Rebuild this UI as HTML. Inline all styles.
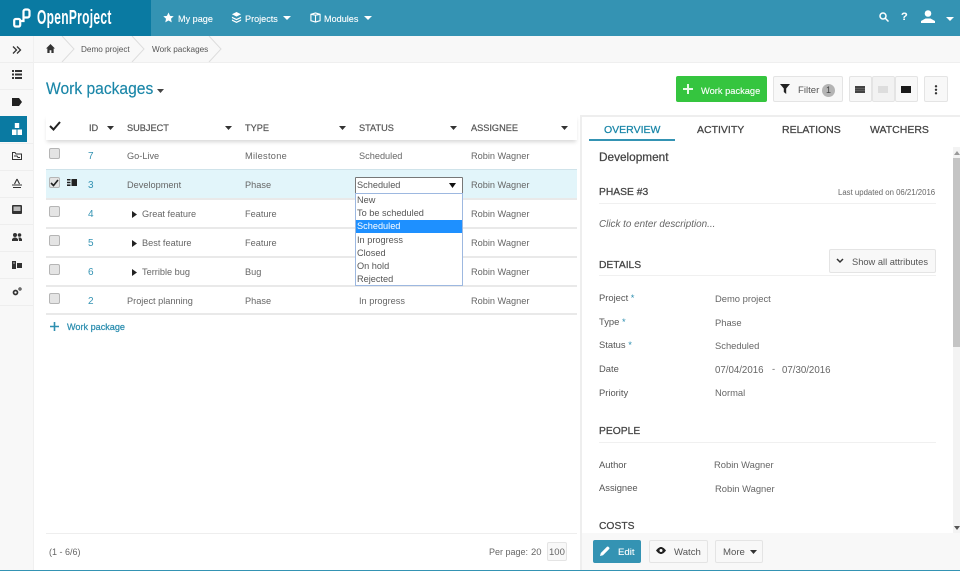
<!DOCTYPE html>
<html><head><meta charset="utf-8"><style>
html,body{margin:0;padding:0;width:960px;height:571px;overflow:hidden;background:#fff}
#p{position:relative;width:960px;height:571px;overflow:hidden;font-family:"Liberation Sans",sans-serif;font-size:9.2px;color:#666;filter:blur(.35px)}
#p div,#p span,#p svg{position:absolute}
.t{white-space:nowrap;line-height:12px}
.m{margin-top:1px}
.h{color:#555;font-size:9.2px;-webkit-text-stroke:.2px #555}
.l{color:#3493b3;font-size:10px;margin-top:1px}
.w{color:#fff;-webkit-text-stroke:.1px #fff;margin-top:1px}
.sep{height:1px;background:#f0f0f0}
.rl{position:absolute;left:46px;width:531px;height:2px;background:#e9e9e9}
.cb{width:9px;height:9px;left:49px;background:#e4e4e4;border:1px solid #b5b5b5;border-radius:2px}
.btn{background:#f8f8f8;border:1px solid #e4e4e4;border-radius:2px;box-sizing:border-box}
.opt{left:357px;color:#555;font-size:9.2px}
.lab{left:599px;color:#555;font-size:9.4px}
.val{left:715px;color:#666;font-size:9.4px}
.sec{left:599px;font-size:10.300px;color:#444;-webkit-text-stroke:.25px #444;margin-top:1px}
.tab{top:123px;font-size:10.500px;color:#444;-webkit-text-stroke:.25px #444;margin-top:1px}
</style></head><body><div id="p">
<div style="left:0;top:0;width:960px;height:36px;background:#3493b3"></div>
<div style="left:0;top:0;width:151px;height:36px;background:#0a7aa2"></div>
<svg style="left:13px;top:8px" width="18" height="20" viewBox="0 0 18 20" fill="none" stroke="#fff" stroke-width="2.200"><rect x="1.200" y="11" width="6" height="7.500" rx="1.500"/><path d="M7 13h3.500V3.500a2 2 0 0 1 2-2h2a2 2 0 0 1 2 2v4a2 2 0 0 1-2 2h-4"/></svg>
<div class="t w" style="left:37px;top:6px;font-size:20px;line-height:22px;transform:scaleX(.6);transform-origin:0 0;letter-spacing:.5px;font-weight:bold;-webkit-text-stroke:0">OpenProject</div>

<svg style="left:163px;top:12px" width="11" height="11" viewBox="0 0 24 24" fill="#fff"><path d="M12 1l3.400 7.400 8 .9-6 5.400 1.700 8L12 18.600 4.900 22.700l1.700-8-6-5.400 8-.9z"/></svg>
<div class="t w" style="left:178px;top:12px;font-size:9.100px">My page</div>
<svg style="left:231px;top:12px" width="11" height="11" viewBox="0 0 12 12" fill="#fff"><path d="M6 0l5 2.500L6 5 1 2.500zM1 5l5 2.500L11 5v1.500L6 9 1 6.500zM1 8l5 2.500L11 8v1.500L6 12 1 9.500z"/></svg>
<div class="t w" style="left:245px;top:12px;font-size:9.100px">Projects</div>
<svg style="left:283px;top:16px" width="8" height="4"><path d="M0 0h8L4 4z" fill="#fff"/></svg>
<svg style="left:310px;top:12px" width="11" height="11" viewBox="0 0 12 12" fill="none" stroke="#fff" stroke-width="1.200"><path d="M1 2.500L6 1l5 1.500v7L6 11 1 9.500zM6 3.500V11M1 2.500l5 1 5-1"/></svg>
<div class="t w" style="left:324px;top:12px;font-size:9.100px">Modules</div>
<svg style="left:364px;top:16px" width="8" height="4"><path d="M0 0h8L4 4z" fill="#fff"/></svg>
<svg style="left:879px;top:12px" width="10" height="10" viewBox="0 0 10 10" fill="none" stroke="#fff" stroke-width="1.500"><circle cx="4" cy="4" r="3"/><path d="M6 6l3.500 3.500"/></svg>
<div class="t w" style="left:901px;top:10px;font-size:11px;font-weight:bold">?</div>
<svg style="left:921px;top:10px" width="14" height="13" viewBox="0 0 14 13" fill="#fff"><circle cx="7" cy="3.500" r="3.300"/><path d="M0 13v-2l4.500-2.500h5L14 11v2z"/></svg>
<svg style="left:946px;top:17px" width="8" height="4"><path d="M0 0h8L4 4z" fill="#fff"/></svg>

<div style="left:0;top:36px;width:960px;height:26px;background:#f8f8f8"></div>
<div style="left:0;top:62px;width:960px;height:1px;background:#efefef"></div>
<div style="left:0;top:36px;width:33px;height:535px;background:#f8f8f8;border-right:1px solid #f0f0f0"></div>
<svg style="left:46px;top:44px" width="9" height="9" viewBox="0 0 10 10" fill="#333"><path d="M5 0l5 5H8.500v5H6V7H4v3H1.500V5H0z"/></svg>
<svg style="left:60px;top:36px" width="170" height="26" fill="none" stroke="#ddd"><path d="M2 0l12 13L2 26M72 0l12 13L72 26M149 0l12 13L149 26"/></svg>
<div class="t m" style="left:81px;top:43px;font-size:8.200px;color:#555">Demo project</div>
<div class="t m" style="left:152px;top:43px;font-size:8.200px;color:#555">Work packages</div>

<div style="left:0;top:62px;width:33px;height:1px;background:#eee"></div>
<div style="left:0;top:89px;width:33px;height:1px;background:#eee"></div>
<div style="left:0;top:116px;width:27px;height:26px;background:#0a7aa2"></div>
<div style="left:0;top:143px;width:33px;height:1px;background:#eee"></div>
<div style="left:0;top:170px;width:33px;height:1px;background:#eee"></div>
<div style="left:0;top:197px;width:33px;height:1px;background:#eee"></div>
<div style="left:0;top:224px;width:33px;height:1px;background:#eee"></div>
<div style="left:0;top:251px;width:33px;height:1px;background:#eee"></div>
<div style="left:0;top:278px;width:33px;height:1px;background:#eee"></div>
<div style="left:0;top:305px;width:33px;height:1px;background:#eee"></div>
<svg style="left:12px;top:46px" width="10" height="8" fill="none" stroke="#333" stroke-width="1.300"><path d="M1 .5L4.500 4 1 7.500M5 .5L8.500 4 5 7.500"/></svg>
<svg style="left:12px;top:70px" width="10" height="9" fill="#333"><path d="M0 0h2v2H0zM3 0h7v2H3zM0 3.500h2v2H0zM3 3.500h7v2H3zM0 7h2v2H0zM3 7h7v2H3z"/></svg>
<svg style="left:12px;top:98px" width="10" height="8" fill="#222"><path d="M0 0h7l3 4-3 4H0z"/></svg>
<svg style="left:12px;top:123px" width="10" height="12" fill="#fff"><path d="M2.800 0h4.400v5H2.800zM0 6.500h4.500V12H0zM5.500 6.500H10V12H5.500z"/></svg>
<svg style="left:12px;top:152px" width="10" height="8" fill="none" stroke="#333"><path d="M.5 1v6.500h9V2H4L3 .5H.5zM2 4h3l1 1.500h2"/></svg>
<svg style="left:12px;top:178px" width="10" height="10" fill="none" stroke="#333" stroke-width="1.100"><path d="M5 1L2.500 6M5 1l2.500 5M0 7h10M1 9.500h8"/></svg>
<svg style="left:12px;top:205px" width="10" height="9"><rect width="10" height="9" rx="1" fill="#333"/><rect x="1.500" y="1.500" width="7" height="4.500" fill="#bbb"/></svg>
<svg style="left:12px;top:233px" width="10" height="8" fill="#333"><circle cx="3" cy="2" r="2"/><circle cx="7.500" cy="2" r="1.800"/><path d="M0 8V6l2-1.500h2L6 6v2zM6.500 4.500h2L10 6v2H7z"/></svg>
<svg style="left:12px;top:260px" width="10" height="9" fill="#333"><path d="M0 1h4v8H0zM5 3h5v5H5z"/><path d="M1 2.500h2v1H1z" fill="#bbb"/></svg>
<svg style="left:12px;top:287px" width="10" height="9" fill="none" stroke="#333"><circle cx="3.500" cy="5.500" r="2" stroke-width="1.700"/><circle cx="8" cy="2" r="1.100"/></svg>

<div class="t" style="left:46px;top:78px;font-size:16.800px;line-height:21px;color:#1a86a8;-webkit-text-stroke:.15px #1a86a8;transform:scaleX(.93);transform-origin:0 0">Work packages</div>
<svg style="left:157px;top:89px" width="7" height="4"><path d="M0 0h7L3.500 4z" fill="#444"/></svg>

<div style="left:676px;top:76px;width:91px;height:26px;background:#35c53f;border-radius:2px"></div>
<svg style="left:683px;top:84px" width="10" height="10" fill="#e8fbe8"><path d="M4 0h2v4h4v2H6v4H4V6H0V4h4z"/></svg>
<div class="t w" style="left:701px;top:84px;font-size:9.300px">Work package</div>
<div class="btn" style="left:773px;top:76px;width:70px;height:26px"></div>
<svg style="left:780px;top:84px" width="10" height="10" fill="#222"><path d="M0 0h10L6.200 4.500V10L3.800 8V4.500z"/></svg>
<div class="t m" style="left:798px;top:84px;color:#555;font-size:9.600px">Filter</div>
<div class="t" style="left:822px;top:84px;width:13px;height:13px;background:#b4b4b4;border-radius:7px;text-align:center;line-height:13px;color:#444;font-size:9px">1</div>
<div class="btn" style="left:849px;top:76px;width:23px;height:26px"></div>
<div class="btn" style="left:872px;top:76px;width:23px;height:26px;background:#f2f2f2"></div>
<div class="btn" style="left:895px;top:76px;width:23px;height:26px"></div>
<div class="btn" style="left:924px;top:76px;width:24px;height:26px"></div>
<div style="left:855px;top:86px;width:10px;height:7px;background:repeating-linear-gradient(#444 0 2px,#777 2px 2.500px)"></div>
<div style="left:878px;top:86px;width:10px;height:7px;background:#ddd"></div>
<div style="left:901px;top:86px;width:10px;height:7px;background:#1a1a1a"></div>
<svg style="left:934px;top:85px" width="4" height="10" fill="#333"><circle cx="2" cy="1.300" r="1.200"/><circle cx="2" cy="4.800" r="1.200"/><circle cx="2" cy="8.300" r="1.200"/></svg>

<div style="left:46px;top:115px;width:531px;height:25px;background:#fff;box-shadow:0 3px 4px -1px rgba(0,0,0,.16)"></div>
<svg style="left:49px;top:121px" width="12" height="10"><path d="M1 5l3.500 3.500L11 1" fill="none" stroke="#222" stroke-width="2"/></svg>
<div class="t h" style="left:89px;top:122px">ID</div>
<div class="t h" style="left:127px;top:122px">SUBJECT</div>
<div class="t h" style="left:245px;top:122px">TYPE</div>
<div class="t h" style="left:359px;top:122px">STATUS</div>
<div class="t h" style="left:471px;top:122px">ASSIGNEE</div>
<svg style="left:107px;top:126px" width="7" height="4"><path d="M0 0h7L3.500 4z" fill="#333"/></svg>
<svg style="left:225px;top:126px" width="7" height="4"><path d="M0 0h7L3.500 4z" fill="#333"/></svg>
<svg style="left:339px;top:126px" width="7" height="4"><path d="M0 0h7L3.500 4z" fill="#333"/></svg>
<svg style="left:450px;top:126px" width="7" height="4"><path d="M0 0h7L3.500 4z" fill="#333"/></svg>
<svg style="left:561px;top:126px" width="7" height="4"><path d="M0 0h7L3.500 4z" fill="#333"/></svg>

<div style="left:46px;top:169px;width:531px;height:30px;background:#e2f5fa"></div>
<div class="rl" style="top:169px;background:#cfe3ea;height:1px"></div>
<div class="rl" style="top:198px"></div><div class="rl" style="top:227px"></div><div class="rl" style="top:256px"></div><div class="rl" style="top:285px"></div><div class="rl" style="top:313px"></div>

<div class="cb" style="top:148px"></div><div class="cb" style="top:177px"></div><div class="cb" style="top:206px"></div><div class="cb" style="top:235px"></div><div class="cb" style="top:264px"></div><div class="cb" style="top:293px"></div>
<svg style="left:50px;top:179px" width="9" height="8"><path d="M1 4l2.500 2.500L8 1" fill="none" stroke="#222" stroke-width="1.600"/></svg>
<svg style="left:67px;top:179px" width="10" height="7" fill="#222"><path d="M0 0h3.500v1.500H0zM0 2.700h3.500v1.500H0zM0 5.400h3.500V7H0zM4.500 0H10v7H4.500z"/></svg>

<div class="t l" style="left:88px;top:150px">7</div><div class="t" style="left:127px;top:150px">Go-Live</div><div class="t" style="left:245px;top:150px;letter-spacing:.3px">Milestone</div><div class="t" style="left:359px;top:150px">Scheduled</div><div class="t" style="left:471px;top:150px">Robin Wagner</div>
<div class="t l" style="left:88px;top:179px">3</div><div class="t" style="left:127px;top:179px">Development</div><div class="t" style="left:245px;top:179px">Phase</div><div class="t" style="left:471px;top:179px">Robin Wagner</div>
<div class="t l" style="left:88px;top:208px">4</div><div class="t" style="left:142px;top:208px">Great feature</div><div class="t" style="left:245px;top:208px">Feature</div><div class="t" style="left:471px;top:208px">Robin Wagner</div>
<div class="t l" style="left:88px;top:237px">5</div><div class="t" style="left:142px;top:237px">Best feature</div><div class="t" style="left:245px;top:237px">Feature</div><div class="t" style="left:471px;top:237px">Robin Wagner</div>
<div class="t l" style="left:88px;top:266px">6</div><div class="t" style="left:142px;top:266px">Terrible bug</div><div class="t" style="left:245px;top:266px">Bug</div><div class="t" style="left:471px;top:266px">Robin Wagner</div>
<div class="t l" style="left:88px;top:295px">2</div><div class="t" style="left:127px;top:295px">Project planning</div><div class="t" style="left:245px;top:295px">Phase</div><div class="t" style="left:359px;top:295px">In progress</div><div class="t" style="left:471px;top:295px">Robin Wagner</div>
<svg style="left:132px;top:211px" width="5" height="7"><path d="M0 0l5 3.500L0 7z" fill="#222"/></svg>
<svg style="left:132px;top:240px" width="5" height="7"><path d="M0 0l5 3.500L0 7z" fill="#222"/></svg>
<svg style="left:132px;top:269px" width="5" height="7"><path d="M0 0l5 3.500L0 7z" fill="#222"/></svg>

<div style="left:355px;top:177px;width:106px;height:15px;background:#fff;border:1px solid #777;border-radius:1px"></div>
<div class="t opt" style="top:179px">Scheduled</div>
<svg style="left:449px;top:183px" width="7" height="5"><path d="M0 0h7L3.500 5z" fill="#111"/></svg>
<div style="left:355px;top:193px;width:106px;height:91px;background:#fff;border:1px solid #9db8e0"></div>
<div style="left:356px;top:220px;width:106px;height:13px;background:#1e90ff"></div>
<div class="t opt" style="top:194px">New</div>
<div class="t opt" style="top:207px">To be scheduled</div>
<div class="t opt" style="top:220px;color:#fff">Scheduled</div>
<div class="t opt" style="top:234px">In progress</div>
<div class="t opt" style="top:247px">Closed</div>
<div class="t opt" style="top:260px">On hold</div>
<div class="t opt" style="top:273px">Rejected</div>

<svg style="left:50px;top:322px" width="9" height="9" fill="#2e8fb0"><path d="M3.700 0h1.600v3.700H9v1.600H5.300V9H3.700V5.300H0V3.700h3.700z"/></svg>
<div class="t" style="left:67px;top:321px;color:#2e8fb0;font-size:9.100px;-webkit-text-stroke:.25px #2e8fb0">Work package</div>

<div style="left:46px;top:533px;width:531px;height:1px;background:#eee"></div>
<div class="t" style="left:49px;top:546px;font-size:9px">(1 - 6/6)</div>
<div class="t" style="left:489px;top:546px;font-size:9px">Per page:</div>
<div class="t m" style="left:531px;top:546px;font-size:9.500px">20</div>
<div class="btn" style="left:547px;top:542px;width:20px;height:19px"></div>
<div class="t m" style="left:549px;top:546px;font-size:9.500px">100</div>

<div style="left:580px;top:115px;width:2px;height:456px;background:#eee"></div>
<div style="left:580px;top:115px;width:380px;height:2px;background:#eee"></div>
<div class="t tab" style="left:604px;color:#1a86a8;-webkit-text-stroke:.25px #1a86a8">OVERVIEW</div>
<div style="left:589px;top:139px;width:86px;height:2px;background:#3493b3"></div>
<div class="t tab" style="left:697px">ACTIVITY</div>
<div class="t tab" style="left:782px">RELATIONS</div>
<div class="t tab" style="left:870px">WATCHERS</div>

<div style="left:953px;top:147px;width:7px;height:386px;background:#f3f3f3"></div>
<div style="left:953px;top:158px;width:7px;height:189px;background:#c4c4c4"></div>
<svg style="left:954px;top:151px" width="6" height="4"><path d="M0 4h6L3 0z" fill="#999"/></svg>
<svg style="left:954px;top:526px" width="6" height="4"><path d="M0 0h6L3 4z" fill="#555"/></svg>

<div class="t" style="left:599px;top:151px;font-size:11.800px;color:#444;-webkit-text-stroke:.25px #444">Development</div>
<div class="t sec" style="top:186px">PHASE #3</div>
<div class="t" style="left:838px;top:187px;font-size:7.800px;color:#666">Last updated on 06/21/2016</div>
<div class="sep" style="left:599px;top:203px;width:337px"></div>
<div class="t" style="left:599px;top:219px;font-size:9.900px;font-style:italic;color:#666">Click to enter description...</div>
<div class="t sec" style="top:259px">DETAILS</div>
<div class="sep" style="left:599px;top:275px;width:337px"></div>
<div class="btn" style="left:829px;top:249px;width:107px;height:24px"></div>
<svg style="left:836px;top:258px" width="8" height="6"><path d="M1 1l3 3 3-3" fill="none" stroke="#333" stroke-width="1.500"/></svg>
<div class="t m" style="left:852px;top:255px;font-size:9.300px;color:#555">Show all attributes</div>

<div class="t lab" style="top:292px">Project <span style="position:static;color:#2e8fb0">*</span></div>
<div class="t val" style="top:293px">Demo project</div>
<div class="t lab" style="top:316px">Type <span style="position:static;color:#2e8fb0">*</span></div>
<div class="t val" style="top:317px">Phase</div>
<div class="t lab" style="top:339px">Status <span style="position:static;color:#2e8fb0">*</span></div>
<div class="t val" style="top:340px">Scheduled</div>
<div class="t lab" style="top:363px">Date</div>
<div class="t val m" style="top:364px;font-size:9.700px">07/04/2016</div>
<div class="t val" style="left:772px;top:363px">-</div>
<div class="t val m" style="left:782px;top:364px;font-size:9.700px">07/30/2016</div>
<div class="t lab" style="top:387px">Priority</div>
<div class="t val" style="top:387px">Normal</div>

<div class="t sec" style="top:425px">PEOPLE</div>
<div class="sep" style="left:599px;top:442px;width:337px"></div>
<div class="t lab" style="top:459px">Author</div>
<div class="t val" style="left:714px;top:459px">Robin Wagner</div>
<div class="t lab" style="top:482px">Assignee</div>
<div class="t val" style="top:483px">Robin Wagner</div>
<div class="t sec" style="top:520px">COSTS</div>

<div style="left:582px;top:533px;width:378px;height:38px;background:#f8f8f8"></div>
<div style="left:593px;top:540px;width:48px;height:23px;background:#3493b3;border-radius:2px"></div>
<svg style="left:600px;top:546px" width="10" height="10" fill="#fff"><path d="M0 10l.8-3L7 .8a1 1 0 0 1 1.400 0l.8.800a1 1 0 0 1 0 1.400L3 9.200z"/></svg>
<div class="t w" style="left:618px;top:546px;font-size:9.600px">Edit</div>
<div class="btn" style="left:649px;top:540px;width:59px;height:23px"></div>
<svg style="left:656px;top:547px" width="10" height="7"><path d="M0 3.500C2 1 3.500 0 5 0s3 1 5 3.500C8 6 6.500 7 5 7S2 6 0 3.500z" fill="#222"/><circle cx="5" cy="3.500" r="1.500" fill="#fff"/></svg>
<div class="t m" style="left:674px;top:546px;color:#555;font-size:9.600px">Watch</div>
<div class="btn" style="left:715px;top:540px;width:48px;height:23px"></div>
<div class="t m" style="left:723px;top:546px;color:#555;font-size:9.600px">More</div>
<svg style="left:750px;top:550px" width="7" height="4"><path d="M0 0h7L3.500 4z" fill="#333"/></svg>

<div style="left:0;top:570px;width:960px;height:1px;background:#3493b3"></div>
</div></body></html>
